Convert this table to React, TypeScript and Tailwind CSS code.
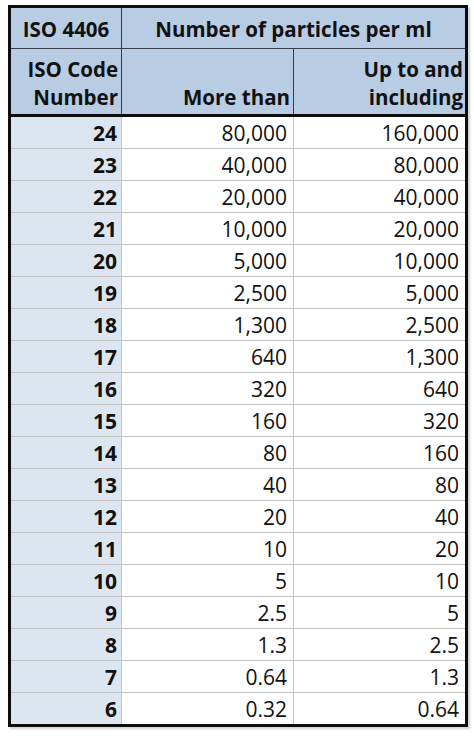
import React from "react";

const rows: [string, string, string][] = [
  ["24", "80,000", "160,000"],
  ["23", "40,000", "80,000"],
  ["22", "20,000", "40,000"],
  ["21", "10,000", "20,000"],
  ["20", "5,000", "10,000"],
  ["19", "2,500", "5,000"],
  ["18", "1,300", "2,500"],
  ["17", "640", "1,300"],
  ["16", "320", "640"],
  ["15", "160", "320"],
  ["14", "80", "160"],
  ["13", "40", "80"],
  ["12", "20", "40"],
  ["11", "10", "20"],
  ["10", "5", "10"],
  ["9", "2.5", "5"],
  ["8", "1.3", "2.5"],
  ["7", "0.64", "1.3"],
  ["6", "0.32", "0.64"],
];

export default function App() {
  return (
    <div
      className="w-[474px] h-[736px] bg-white pt-[5px] pl-[8px] text-[#111]"
      style={{ fontFamily: '"Open Sans", "Noto Sans", sans-serif' }}
    >
      <div className="w-[460px] border-[3px] border-[#0d0d0d] shadow-[2px_2px_2px_rgba(0,0,0,0.18)]">
        {/* header row 1 */}
        <div className="flex h-[41px] bg-[#b8cce4] border-b border-[#3c3c46] font-bold text-[20.5px]">
          <div className="w-[111px] border-r border-[#3c3c46] flex items-center justify-center pt-[3px]">
            ISO 4406
          </div>
          <div className="flex-1 flex items-center justify-center pt-[3px]">
            Number of particles per ml
          </div>
        </div>
        {/* header row 2 */}
        <div className="flex h-[68px] bg-[#b8cce4] border-b-[3px] border-[#0d0d0d] font-bold text-[20.5px] leading-[28px]">
          <div className="w-[111px] border-r border-[#3c3c46] flex flex-col items-end justify-end pr-[3px] pb-[3px]">
            <span>ISO Code</span>
            <span>Number</span>
          </div>
          <div className="w-[172px] border-r border-[#3c3c46] flex flex-col items-end justify-end pr-[3px] pb-[3px]">
            <span>More than</span>
          </div>
          <div className="flex-1 flex flex-col items-end justify-end pr-[2px] pb-[3px]">
            <span>Up to and</span>
            <span>including</span>
          </div>
        </div>
        {/* data */}
        {rows.map((r, i) => (
          <div
            key={r[0]}
            className={
              "flex text-[21px] " +
              (i < rows.length - 1 ? "h-[32px] border-b border-[#c4c4c4]" : "h-[31px]")
            }
          >
            <div className="w-[111px] bg-[#dce6f1] border-r border-[#c4c4c4] flex items-center justify-end pr-[4px] pt-[2px] font-bold">
              {r[0]}
            </div>
            <div className="w-[172px] border-r border-[#c4c4c4] flex items-center justify-end pr-[6px] pt-[2px]">
              {r[1]}
            </div>
            <div className="flex-1 flex items-center justify-end pr-[6px] pt-[2px]">
              {r[2]}
            </div>
          </div>
        ))}
      </div>
    </div>
  );
}
